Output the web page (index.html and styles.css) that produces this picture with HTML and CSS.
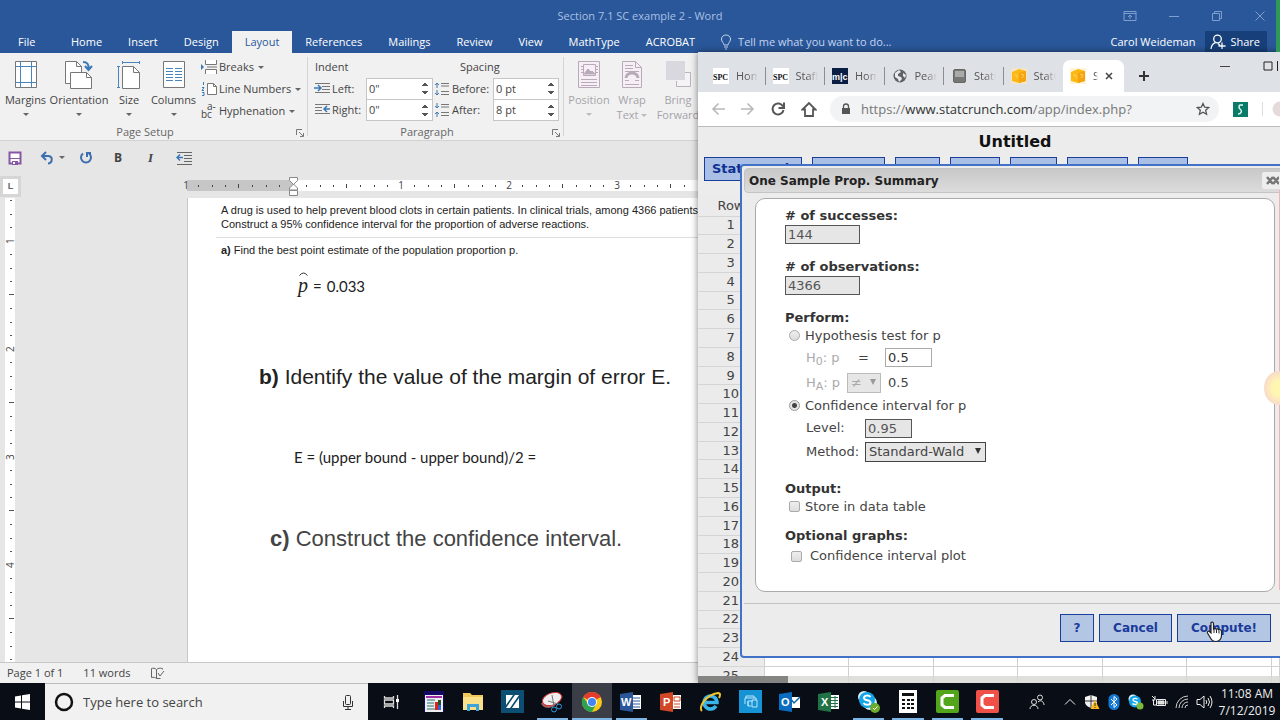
FILE: index.html
```html
<!DOCTYPE html>
<html lang="en">
<head>
<meta charset="utf-8">
<title>Section 7.1 SC example 2 - Word</title>
<link rel="stylesheet" href="styles.css">
</head>
<body>
<div class="desktop">
<main class="workspace">

<section class="word">
  <header class="word-head">
    <div class="title-row">
      <span></span>
      <span class="doc-title">Section 7.1 SC example 2 - Word</span>
      <div class="win-controls">
        <button aria-label="Ribbon options"><svg width="14" height="12" fill="none" stroke="currentColor"><path d="M1 1.500h12v9H1zM1 3.500h12M7 9V5M5 7l2-2 2 2"/></svg></button>
        <button aria-label="Minimize"><svg width="12" height="12" fill="none" stroke="currentColor"><path d="M1 6.500h10"/></svg></button>
        <button aria-label="Restore"><svg width="12" height="12" fill="none" stroke="currentColor"><path d="M1.500 3.500h7v7h-7zM3.500 3.500v-2h7v7h-2"/></svg></button>
        <button aria-label="Close"><svg width="12" height="12" fill="none" stroke="currentColor"><path d="M1.500 1.500l9 9M10.500 1.500l-9 9"/></svg></button>
      </div>
    </div>
    <nav class="word-tabs">
      <button class="file">File</button><button>Home</button><button>Insert</button><button>Design</button><button class="on">Layout</button><button>References</button><button>Mailings</button><button>Review</button><button>View</button><button>MathType</button><button>ACROBAT</button>
      <button class="tell"><svg width="12" height="16" fill="none" stroke="currentColor"><path d="M4 11c0-2-2.500-3-2.500-6a4.500 4 0 0 1 9 0c0 3-2.500 4-2.500 6zM4 13h4M5 15h2"/></svg>Tell me what you want to do...</button>
      <button class="user">Carol Weideman</button>
      <button class="share"><svg width="16" height="16" fill="none" stroke="currentColor" stroke-width="1.300"><circle cx="7.500" cy="5" r="3.800"/><path d="M1 15c.3-3 2-5.500 4.500-6.300M8 9.500l2 2M12 8.500v6.500M8.500 12h7"/></svg>Share</button>
    </nav>
  </header>

  <div class="ribbon">
    <section class="group setup">
      <div class="group-body">
        <button class="big margins"><svg width="24" height="28" fill="none"><path d="M1.500 1.500h21v26h-21z" fill="#fff" stroke="#777"/><path d="M6.500 2v25M17.500 2v25M2 6.500h20M2 22.500h20" stroke="#4a84bd"/></svg><span>Margins</span><i></i></button>
        <button class="big orient"><svg width="30" height="30" fill="none"><path d="M1.500 1.500h11l5 5v17h-16z" fill="#fff" stroke="#777"/><path d="M12.500 1.500v5h5" stroke="#777"/><path d="M6.500 12.500h16l5 5v11h-21z" fill="#fff" stroke="#777"/><path d="M22.500 12.500v5h5" stroke="#777"/><path d="M19 2c4 0 6 2 5.500 7M21 6l3.500 4L28 6" stroke="#3b78b5" stroke-width="2"/></svg><span>Orientation</span><i></i></button>
        <button class="big size"><svg width="26" height="30" fill="none"><path d="M6.500 6.500h11l6 6v16h-17z" fill="#fff" stroke="#777"/><path d="M17.500 6.500v6h6" stroke="#777"/><path d="M6 2.500h18M6.500 1v3M23.500 1v3M2.500 6v22M1 6.500h3M1 27.500h3" stroke="#4a84bd"/></svg><span>Size</span><i></i></button>
        <button class="big cols"><svg width="24" height="28" fill="none"><path d="M1.500 1.500h21v26h-21z" fill="#fff" stroke="#777"/><path d="M4 8.500h7M4 11.500h7M4 14.500h7M4 17.500h7M4 20.500h7M13 8.500h7M13 11.500h7M13 14.500h7M13 17.500h7M13 20.500h7" stroke="#4a84bd"/></svg><span>Columns</span><i></i></button>
        <div class="stack">
          <button><svg width="16" height="16" fill="none" stroke="#777"><path d="M4.500 1v4.500h11V1M4.500 15v-4.500h11V15M6 8h10" fill="#fff"/><path d="M0 5l3 3-3 3z" fill="#3b78b5" stroke="none"/></svg>Breaks<i></i></button>
          <button><svg width="16" height="16" fill="none" stroke="#777"><path d="M6.500 2.500h6l3 3v8h-9z" fill="#fff"/><path d="M12.500 2.500v3h3"/><path d="M2.500 1v3M1 6.500h2l-2 3h2M1 11.500h2v3H1" stroke="#3b78b5"/></svg>Line Numbers<i></i></button>
          <button><svg class="hyph" width="16" height="16"><text x="0" y="15">bc</text><text x="6" y="7">a-</text></svg>Hyphenation<i></i></button>
        </div>
      </div>
      <footer>Page Setup<button class="launch" aria-label="Page Setup dialog"><svg width="8" height="8" fill="none" stroke="#777"><path d="M.5 6V.5H6M3 3l4 4M7.500 4v3.500H4"/></svg></button></footer>
    </section>
    <section class="group para">
      <div class="group-body para-grid">
        <span class="hd">Indent</span><span></span><span class="hd sp">Spacing</span><span></span>
        <label for="il"><svg width="16" height="14" fill="none" stroke="#777"><path d="M1 1.500h15M8 4.500h8M8 7.500h8M1 10.500h15"/><path d="M0 6h6M4 3l3 3-3 3" stroke="#3b78b5" stroke-width="1.500"/></svg>Left:</label><span class="spin"><input id="il" value='0"'><b></b></span>
        <label class="r" for="sb"><svg width="16" height="16" fill="none" stroke="#777"><path d="M7 2.500h8M7 5h8M7 10.500h8M7 13.500h8"/><path d="M3 7V2M1 4l2-2 2 2M3 9v5M1 12l2 2 2-2" stroke="#3b78b5"/></svg>Before:</label><span class="spin"><input id="sb" value="0 pt"><b></b></span>
        <label for="ir"><svg width="16" height="14" fill="none" stroke="#777"><path d="M1 1.500h15M1 4.500h7M1 7.500h7M1 10.500h15"/><path d="M16 6h-6M13 3l-3 3 3 3" stroke="#3b78b5" stroke-width="1.500"/></svg>Right:</label><span class="spin"><input id="ir" value='0"'><b></b></span>
        <label class="r" for="sa"><svg width="16" height="16" fill="none" stroke="#777"><path d="M7 2.500h8M7 5h8M7 10.500h8M7 13.500h8"/><path d="M3 1v5M1 4l2 2 2-2M3 15v-5M1 12l2-2 2 2" stroke="#3b78b5"/></svg>After:</label><span class="spin"><input id="sa" value="8 pt"><b></b></span>
      </div>
      <footer>Paragraph<button class="launch" aria-label="Paragraph dialog"><svg width="8" height="8" fill="none" stroke="#777"><path d="M.5 6V.5H6M3 3l4 4M7.500 4v3.500H4"/></svg></button></footer>
    </section>
    <section class="group arrange">
      <div class="group-body">
        <button class="big pos"><svg width="24" height="28" fill="none" stroke="#b9aab9"><path d="M1.500 1.500h21v26h-21z" fill="#f6f0f6"/><path d="M6.500 4.500h12v11h-12zM4 6.500h2M4 9.500h2M4 12.500h2M19 6.500h2M19 9.500h2M19 12.500h2M4 19.500h16M4 22.500h16M4 25.500h16"/><path d="M7 14l4-5 3 3 1-1 3 3z" fill="#b9aab9"/></svg><span>Position</span><i></i></button>
        <button class="big wrap"><svg width="22" height="28" fill="none" stroke="#b9aab9"><path d="M1.500 1.500h13l6 6v20h-19z" fill="#f6f0f6"/><path d="M14.500 1.500v6h6M4 5.500h8M4 8.500h8M4 11.500h14M4 20.500h4M14 20.500h4M4 24.500h14"/><path d="M5 18a6 5 0 0 1 12 0" stroke-width="3"/></svg><span>Wrap</span><span>Text <i></i></span></button>
        <button class="big bring"><svg width="26" height="28" fill="none" stroke="#b9b4bc"><path d="M18 12.500h7.500v14h-14V21" fill="#f6f3f6"/><path d="M1 1h19v19H1z" fill="#dad8df" stroke="none"/></svg><span>Bring</span><span>Forward</span></button>
      </div>
    </section>
  </div>

  <div class="qat">
    <button aria-label="Save"><svg width="14" height="14" fill="none"><path d="M1.500 1.500h11v11h-11z" fill="#fff" stroke="#8757a5" stroke-width="2"/><path d="M1 7h12v1H1zM4 10h6v4H4z" fill="#8757a5"/><path d="M5 11h2v2H5z" fill="#fff"/></svg></button>
    <button class="undo" aria-label="Undo"><svg width="14" height="14" fill="none" stroke="#3d6fae" stroke-width="2"><path d="M6 1L2 5l4 4M2 5h6c5 0 5 7 0 7.500"/></svg><i></i></button>
    <button aria-label="Repeat"><svg width="14" height="14" fill="none" stroke="#3d6fae" stroke-width="2"><path d="M4 2.500a5 5 0 1 0 6 0M8 6V2h4"/></svg></button>
    <button class="bold">B</button>
    <button class="ital">I</button>
    <button aria-label="Decrease indent"><svg width="16" height="14" fill="none" stroke="#666"><path d="M1 1.500h15M8 4.500h8M8 7.500h8M8 10.500h8M1 13.500h15"/><path d="M7 6.500H1M4 3.500l-3 3 3 3" stroke="#3b78b5" stroke-width="1.500"/></svg></button>
  </div>

  <div class="doc-area">
    <div class="corner"><span>L</span></div>
    <div class="hruler">
      <svg width="100%" height="20">
        <defs><pattern id="ticks" width="108" height="12" patternUnits="userSpaceOnUse" patternTransform="translate(106 4)"><path d="M13 5h1v2h-1zM27 5h1v2h-1zM40 5h1v2h-1zM53 4h1v4h-1zM67 5h1v2h-1zM81 5h1v2h-1zM94 5h1v2h-1z" fill="#444"/></pattern></defs>
        <rect y="4" width="106" height="11" fill="#c6c6c6"/><rect x="106" y="4" width="100%" height="11" fill="#fff"/>
        <rect y="4" width="100%" height="12" fill="url(#ticks)"/>
        <g class="num"><text x="-1" y="13">1</text><text x="214" y="13">1</text><text x="322" y="13">2</text><text x="430" y="13">3</text></g>
        <path d="M102.500 1.500h8v3l-4 4-4-4zM102.500 14v-2l4-4 4 4v2zM102.500 14.500h8v5h-8z" fill="#fff" stroke="#888"/>
      </svg>
    </div>
    <div class="vruler">
      <svg width="10" height="100%">
        <defs><pattern id="vticks" width="10" height="108" patternUnits="userSpaceOnUse" patternTransform="translate(0 43)"><path d="M5 13h2v1H5zM5 27h2v1H5zM5 40h2v1H5zM4 53h5v1H4zM5 67h2v1H5zM5 81h2v1H5zM5 94h2v1H5z" fill="#555"/></pattern></defs>
        <rect width="10" height="100%" fill="#fff"/><rect width="10" height="100%" fill="url(#vticks)"/>
        <g class="num"><text transform="translate(9 46) rotate(-90)">1</text><text transform="translate(9 154) rotate(-90)">2</text><text transform="translate(9 262) rotate(-90)">3</text><text transform="translate(9 370) rotate(-90)">4</text></g>
      </svg>
    </div>
    <article class="paper">
      <p class="small">A drug is used to help prevent blood clots in certain patients. In clinical trials, among 4366 patients<br>Construct a 95% confidence interval for the proportion of adverse reactions.</p>
      <p class="small part-a"><b>a)</b> Find the best point estimate of the population proportion p.</p>
      <p class="phat"><span class="hat"><svg width="9" height="4" fill="none" stroke="#333"><path d="M.5 3.500q4-5 8 0"/></svg><em>p</em></span><span>=</span><span>0.033</span></p>
      <p class="large part-b"><b>b)</b> Identify the value of the margin of error E.</p>
      <p class="eq">E = (upper bound - upper bound)/2 =</p>
      <p class="large part-c"><b>c)</b> Construct the confidence interval.</p>
    </article>
  </div>
  <footer class="status"><span>Page 1 of 1</span><span>11 words</span><svg width="15" height="13" fill="none" stroke="#666"><path d="M6.500 2.500C5 1 3 1 1.500 1.500v9c2-.5 4 0 5 1zM6.500 2.500C8 1 10 1 12.500 1.500v1M6.500 11.500h4M8 6l2 3 4-5"/></svg></footer>
</section>

<section class="chrome">
  <div class="tabstrip">
    <div class="tabs">
      <button class="tab"><svg width="16" height="16"><path d="M0 0h16v16H0z" fill="#fff"/><text x="0" y="12" class="spc">SPC</text></svg><span>Home</span></button>
      <button class="tab"><svg width="16" height="16"><path d="M0 0h16v16H0z" fill="#fff"/><text x="0" y="12" class="spc">SPC</text></svg><span>Staff</span></button>
      <button class="tab"><svg width="16" height="16"><path d="M0 0h16v16H0z" fill="#0b1f44"/><text x="0" y="12" class="mc">m|c</text></svg><span>Home</span></button>
      <button class="tab"><svg width="16" height="16"><circle cx="8" cy="8" r="6.500" fill="#5f6368"/><path d="M3 5l4-3 2 2-3 2v2l3 1 1 2-3 3-1-3-3-2zM11 5l3 2-1 3-2-2z" fill="#e8eaee"/></svg><span>Pear</span></button>
      <button class="tab"><svg width="16" height="16"><rect x="2.500" y="1.500" width="12" height="13" rx="1.500" fill="#777" stroke="#666"/><path d="M4 3h9v6H4z" fill="#aaa"/></svg><span>StatC</span></button>
      <button class="tab"><svg width="16" height="16"><path d="M0 0h16v16H0z" fill="#f3e6c8"/><path d="M1 4l7-3 7 2v10l-7 2-7-2z" fill="#fdb813"/><path d="M8 5l7-2v10l-7 2z" fill="#f5a312"/><path d="M3 7h3v3M10 6l3 1-2 3" fill="none" stroke="#fcd25a"/></svg><span>StatC</span></button>
      <button class="tab on"><svg width="16" height="16"><path d="M0 0h16v16H0z" fill="#fff4d8"/><path d="M1 4l7-3 7 2v10l-7 2-7-2z" fill="#fdb813"/><path d="M8 5l7-2v10l-7 2z" fill="#f5a312"/><path d="M3 7h3v3M10 6l3 1-2 3" fill="none" stroke="#fcd25a"/></svg><span>S</span><svg class="x" width="8" height="8" stroke="#444" stroke-width="1.500"><path d="M1 1l6 6M7 1L1 7"/></svg></button>
    </div>
    <button class="newtab" aria-label="New tab"><svg width="12" height="12" stroke="#333" stroke-width="2"><path d="M6 1v10M1 6h10"/></svg></button>
    <div class="cwin"><button aria-label="Minimize window"><svg width="10" height="10" stroke="#444"><path d="M0 5.500h10"/></svg></button><button aria-label="Maximize window"><svg width="15" height="10" stroke="#222" fill="none"><path d="M1 1h8v8H1zM14.500 0v10"/></svg></button></div>
  </div>
  <div class="toolbar">
    <button aria-label="Back"><svg width="14" height="14" fill="none" stroke="#b8b8b8" stroke-width="1.600"><path d="M14 7H2M7.500 1.500L2 7l5.500 5.500"/></svg></button>
    <button aria-label="Forward"><svg width="14" height="14" fill="none" stroke="#b8b8b8" stroke-width="1.600"><path d="M0 7h12M6.500 1.500L12 7l-5.500 5.500"/></svg></button>
    <button aria-label="Reload"><svg width="14" height="14" fill="none" stroke="#555" stroke-width="2"><path d="M12 4.500A5.500 5.500 0 1 0 12.500 8M13 .5V6H7.500"/></svg></button>
    <button aria-label="Home page"><svg width="16" height="16" fill="none" stroke="#555" stroke-width="1.800"><path d="M1.500 8.500L8 2l6.500 6.500h-2.500V15H4V8.500z"/></svg></button>
    <div class="omni"><svg width="10" height="12"><path d="M1 5h8v6H1z" fill="#555"/><path d="M2.500 5V3.500a2.500 2.500 0 0 1 5 0V5" fill="none" stroke="#555" stroke-width="1.300"/></svg><span class="url">https://<b>www.statcrunch.com</b>/app/index.php?</span><svg width="14" height="14" fill="none" stroke="#555" stroke-width="1.300"><path d="M7 1.500l1.700 3.700 4 .4-3 2.700.9 4L7 10.200l-3.600 2.100.9-4-3-2.700 4-.4z"/></svg></div>
    <svg class="ext" width="15" height="15"><path d="M0 0h15v15H0z" fill="#0c7a68"/><path d="M10 3H7.500c-2 0-2 3 0 4.500S8 12 5 12" fill="none" stroke="#d8fff2" stroke-width="1.500"/></svg>
    <span class="vsep"></span>
    <svg class="avatar" width="16" height="16"><circle cx="8" cy="8" r="7.500" fill="#e6dada"/></svg>
  </div>

  <div class="app">
    <h1>Untitled</h1>
    <div class="menu"><button>StatCrunch</button><button aria-label="Applets"></button><button aria-label="Edit"></button><button aria-label="Data"></button><button aria-label="Stat"></button><button aria-label="Graph"></button><button aria-label="Help"></button></div>
    <div class="sheet">
    <table>
      <colgroup><col class="c0"><col class="c1"><col class="c2"><col class="c1"><col class="c2"><col class="c1"><col class="c2"><col></colgroup>
      <tr class="head"><th>Row<th><th><th><th><th><th><th>
      <tr><th>1<td><td><td><td><td><td><td>
      <tr><th>2<td><td><td><td><td><td><td>
      <tr><th>3<td><td><td><td><td><td><td>
      <tr><th>4<td><td><td><td><td><td><td>
      <tr><th>5<td><td><td><td><td><td><td>
      <tr><th>6<td><td><td><td><td><td><td>
      <tr><th>7<td><td><td><td><td><td><td>
      <tr><th>8<td><td><td><td><td><td><td>
      <tr><th>9<td><td><td><td><td><td><td>
      <tr><th>10<td><td><td><td><td><td><td>
      <tr><th>11<td><td><td><td><td><td><td>
      <tr><th>12<td><td><td><td><td><td><td>
      <tr><th>13<td><td><td><td><td><td><td>
      <tr><th>14<td><td><td><td><td><td><td>
      <tr><th>15<td><td><td><td><td><td><td>
      <tr><th>16<td><td><td><td><td><td><td>
      <tr><th>17<td><td><td><td><td><td><td>
      <tr><th>18<td><td><td><td><td><td><td>
      <tr><th>19<td><td><td><td><td><td><td>
      <tr><th>20<td><td><td><td><td><td><td>
      <tr><th>21<td><td><td><td><td><td><td>
      <tr><th>22<td><td><td><td><td><td><td>
      <tr><th>23<td><td><td><td><td><td><td>
      <tr><th>24<td><td><td><td><td><td><td>
      <tr><th>25<td><td><td><td><td><td><td>
    </table>
    </div>
    <div class="hscroll"><span></span></div>
  </div>

  <form class="dialog" onsubmit="return false">
    <header><h2>One Sample Prop. Summary</h2><button type="button" aria-label="Close dialog"><svg width="13" height="9" stroke="#777" stroke-width="2.500"><path d="M1 1l6 7M7 1L1 8M7 1l6 7M13 1L7 8"/></svg></button></header>
    <div class="panel">
      <label class="hd" for="succ"># of successes:</label>
      <input class="box w75" id="succ" value="144">
      <label class="hd gap" for="obs"># of observations:</label>
      <input class="box w75" id="obs" value="4366">
      <div class="hd gap">Perform:</div>
      <div class="row r18"><input type="radio" name="t" id="ht"><label for="ht">Hypothesis test for p</label></div>
      <div class="row r25 sub dim"><label for="h0" class="h0">H<sub>0</sub>: p</label><span class="equals">=</span><input class="box white w47" id="h0" value="0.5"></div>
      <div class="row r25 sub dim"><label for="ha">H<sub>A</sub>: p</label><span class="pick dis"><select id="ha" disabled><option>≠</option></select></span><span class="val">0.5</span></div>
      <div class="row r22"><input type="radio" name="t" id="ci" checked><label for="ci">Confidence interval for p</label></div>
      <div class="row r22 sub"><label for="lv" class="lv">Level:</label><input class="box w47" id="lv" value="0.95"></div>
      <div class="row r25 sub"><label for="me" class="lv">Method:</label><span class="pick"><select id="me"><option>Standard-Wald</option></select></span></div>
      <div class="hd gap3">Output:</div>
      <div class="row r18"><input type="checkbox" id="st"><label for="st">Store in data table</label></div>
      <div class="hd gap2">Optional graphs:</div>
      <div class="row r22 plot"><input type="checkbox" id="cp"><label for="cp">Confidence interval plot</label></div>
    </div>
    <footer><button type="button" class="q">?</button><button type="button" class="cancel">Cancel</button><button type="button" class="compute">Compute!</button></footer>
  </form>
</section>

<span class="edge-top"></span><span class="edge-red"></span><span class="blob"></span>
<svg class="cursor" width="18" height="22"><path d="M5 1.500c1.500-1 2.500 0 2.500 1.500v5c1-1 2.300-.8 2.700.3 1-.7 2.200-.4 2.500.7 1.500-.7 2.800 0 2.800 1.500v4c0 3-2 6-5.500 6-3 0-4.500-1.500-5.500-3.500l-3-5c-.5-1.500 1-2.500 2.200-1.200L5 12z" fill="#fff" stroke="#222" stroke-width="1.200"/><path d="M8 8v4M10.500 9v3M13 10v2.500" stroke="#222"/></svg>
</main>

<footer class="taskbar">
  <button class="start" aria-label="Start"><svg width="15" height="16" fill="#fff"><path d="M0 2.500l6-1v6H0zM7 1.300L15 0v7.500H7zM0 8.500h6v6l-6-1zM7 8.500h8V16l-8-1.300z"/></svg></button>
  <label class="search"><svg width="20" height="20" fill="none" stroke="#111" stroke-width="2.500"><circle cx="10" cy="10" r="8"/></svg><input placeholder="Type here to search" aria-label="Search"><svg width="12" height="16" fill="none" stroke="#333"><rect x="3.500" y="1.500" width="5" height="9" rx="1"/><path d="M1.500 7v5.500h9V7M6 12.500v3M3 15.500h6"/></svg></label>
  <button class="tview" aria-label="Task view"><svg width="16" height="16" fill="none" stroke="#ddd"><path d="M1.500 2v2h9V2M1.500 14v-2h9v2M1.500 6h9v4h-9zM14.500 1v14" stroke-width="1.300"/><path d="M13 5h3v3h-3z" fill="#fff" stroke="none"/></svg></button>
  <div class="apps">
    <button aria-label="Planner"><svg width="22" height="22"><path d="M1 0h20v21H1z" fill="#140a66"/><path d="M2 4h18v17H2z" fill="#eee"/><path d="M3 5h16v2H3z" fill="#a22ba8"/><path d="M4 9h8M4 12h7M4 15h7M4 18h8" stroke="#277"/><path d="M12 11h3v8h-3z" fill="#d22"/><path d="M15 9h3v5h-3z" fill="#252"/><path d="M15 14h3v5h-3z" fill="#36c"/></svg></button>
    <button aria-label="File Explorer"><svg width="22" height="20"><path d="M1 1h7l2 2h11v15H1z" fill="#f0c95a"/><path d="M1 5h20v13H1z" fill="#fbe08a"/><path d="M5 12h12v7h-3v-4H8v4H5z" fill="#3da5dc"/></svg></button>
    <button aria-label="Zotero"><svg width="23" height="23"><path d="M0 0h23v23H0z" fill="#0c4f73"/><path d="M5 5h7L5 15zM14 5h4L9 18H5zM18 8v10h-7z" fill="#fff"/></svg></button>
    <button class="run" aria-label="Snipping Tool"><svg width="24" height="22" fill="none"><path d="M2 12c2 5 9 5 13 1l7-8" stroke="#a66" stroke-width="2"/><ellipse cx="12" cy="8" rx="10" ry="6" fill="#eee" stroke="#c33" transform="rotate(-20 12 8)"/><path d="M12 4l2 11M8 10l10 3" stroke="#777"/><circle cx="14" cy="18.500" r="2.500" stroke="#39d"/><circle cx="19" cy="15.500" r="2.500" stroke="#39d"/></svg></button>
    <button class="run active" aria-label="Chrome"><svg width="22" height="22"><circle cx="11" cy="11" r="10" fill="#fbc816"/><path d="M11 11L2.300 6A10 10 0 0 1 19.700 6z" fill="#e33b2e"/><path d="M2.300 6A10 10 0 0 0 11 21l4-7.500L7 13z" fill="#2fa24f"/><path d="M11 6h8.700L17 5 11 1z" fill="#e33b2e"/><circle cx="11" cy="11" r="5" fill="#fff"/><circle cx="11" cy="11" r="4" fill="#4285f4"/></svg></button>
    <button class="run" aria-label="Word"><svg width="22" height="20"><path d="M9 3h12v14H9z" fill="#fff"/><path d="M13 6h7M13 9h7M13 12h7M13 15h7" stroke="#2b579a"/><path d="M0 2l13-2v20L0 18z" fill="#2b579a"/><text x="1" y="14" class="ic">W</text></svg></button>
    <button aria-label="PowerPoint"><svg width="22" height="20"><path d="M9 3h12v14H9z" fill="#fff"/><path d="M14 5h6v4h-6zM14 12h6M14 15h6" stroke="#d24726" fill="none"/><path d="M0 2l13-2v20L0 18z" fill="#d24726"/><text x="3" y="14" class="ic">P</text></svg></button>
    <button aria-label="Internet Explorer"><svg width="22" height="22" fill="none"><path d="M17 15a6.500 6.500 0 1 1 1-3.500H6" stroke="#39b5ea" stroke-width="3.500"/><path d="M3 20C-1 17 6 4 19 2c3 0 2 3 1 5" stroke="#f0c22c" stroke-width="2"/></svg></button>
    <button aria-label="Workspace"><svg width="23" height="23" fill="none"><path d="M0 0h23v23H0z" fill="#1593d4"/><path d="M7 8V6h8v2M6 14V8h11v2M9 16V11h5M13 10h5v7h-5zM9 11v5h3" stroke="#bfe6fb"/></svg></button>
    <button aria-label="Outlook"><svg width="22" height="20"><path d="M10 5h11v11H10z" fill="#fff"/><path d="M10 5l5 6 6-6" stroke="#0a64ad" fill="none" stroke-width="1.500"/><path d="M0 2l13-2v20L0 18z" fill="#0a6cc0"/><text x="2" y="14" class="ic">O</text></svg></button>
    <button aria-label="Excel"><svg width="22" height="20"><path d="M9 3h12v14H9z" fill="#fff"/><path d="M13 5.500h7M13 8.500h7M13 11.500h7M13 14.500h7M17 4v12" stroke="#217346"/><path d="M0 2l13-2v20L0 18z" fill="#217346"/><text x="3" y="14" class="ic">X</text></svg></button>
    <button class="run" aria-label="Skype"><svg width="24" height="24"><circle cx="7" cy="7" r="6" fill="#dff3fc"/><circle cx="13" cy="13" r="7" fill="#dff3fc"/><circle cx="10" cy="10" r="8" fill="#12a5e8"/><path d="M13.500 7C12 5 7 5 7 8s6.500 1.500 6.500 4.500S8 15.500 6.500 13" stroke="#fff" stroke-width="2" fill="none"/><circle cx="18" cy="18" r="5" fill="#6cab2b"/><path d="M16 18l1.500 1.500 3-3" stroke="#fff" fill="none"/></svg></button>
    <button class="run" aria-label="Calculator"><svg width="18" height="23"><path d="M0 0h18v23H0z" fill="#fff"/><path d="M3 3h12v3H3zM3 9h3v2H3zM8 9h3v2H8zM12 9h3v2h-3zM3 13h3v2H3zM8 13h3v2H8zM12 13h3v2h-3zM3 17h3v2H3zM8 17h3v2H8zM12 17h3v2h-3z" fill="#111"/></svg></button>
    <button class="run" aria-label="Camtasia"><svg width="23" height="23" fill="none"><rect width="23" height="23" rx="2" fill="#53a61b"/><path d="M18 5.500H9L6 8v7l3 2.500h9" stroke="#fff" stroke-width="3"/></svg></button>
    <button class="run" aria-label="Recorder"><svg width="23" height="23" fill="none"><rect width="23" height="23" rx="2" fill="#ef5149"/><path d="M18 5.500H9L6 8v7l3 2.500h9" stroke="#fff" stroke-width="3"/></svg></button>
  </div>
  <div class="tray">
    <svg class="people" width="16" height="16" fill="none" stroke="#ddd"><circle cx="5" cy="8" r="2.500"/><path d="M1 15c0-5 8-5 8 0"/><circle cx="11" cy="3.500" r="2.500"/><path d="M9 8c3-3 6 0 6 3"/></svg>
    <svg width="14" height="16" fill="none" stroke="#eee"><path d="M2 10.500l5-5 5 5"/></svg>
    <svg width="16" height="16"><path d="M1 3l6-2 6 2v5c0 3-3 5-6 6-3-1-6-3-6-6z" fill="#f2f2f2"/><path d="M7 1v13M1 7h12" stroke="#333"/><path d="M11 6l4.500 9h-9z" fill="#fdbb1e"/><path d="M11 9v3M11 13v1" stroke="#333"/></svg>
    <svg width="14" height="16" fill="none"><rect x="1.500" width="11" height="16" rx="5.500" fill="#1377d4"/><path d="M4 5l6 6-3 2.500v-11L10 5l-6 6" stroke="#fff"/></svg>
    <svg width="16" height="16"><circle cx="5" cy="5" r="4.500" fill="#dff3fc"/><circle cx="7" cy="7.500" r="6" fill="#12a5e8"/><path d="M9.500 5C8 4 5 4 5 6s4.500 1 4.500 3-4 2-5 .5" stroke="#fff" stroke-width="1.400" fill="none"/><circle cx="12" cy="12" r="3.500" fill="#7db93a"/></svg>
    <svg width="17" height="14" fill="none" stroke="#eee"><path d="M5.500 4.500h9v6h-9zM16 6v3M1 1l3 3M4 1v4H1M2.500 5v5H5"/><path d="M7 6h6v3H7z" fill="#ddd"/></svg>
    <svg width="14" height="14" fill="none" stroke="#ccc"><path d="M1 13A12 12 0 0 1 13 1M4 13a9 9 0 0 1 9-9M7 13a6 6 0 0 1 6-6M10 13a3 3 0 0 1 3-3"/></svg>
    <svg width="17" height="14" fill="none" stroke="#eee"><path d="M1 4.500h3L8 1v12L4 9.500H1zM10 5q1.500 2 0 4M12 3q3 4 0 8M14 1q4 6 0 12"/></svg>
  </div>
  <time class="clock"><span>11:08 AM</span><span>7/12/2019</span></time>
</footer>
</div>
</body>
</html>
```
FILE: styles.css
```css
* { box-sizing: border-box; }
body { margin: 0; font: 11px/16px "Open Sans", "Noto Sans", sans-serif; color: #444; }
button { border: 0; padding: 0; margin: 0; background: none; font: inherit; color: inherit; white-space: nowrap; }
svg { display: block; flex: none; }
h1, h2, p { margin: 0; }
.desktop { display: flex; flex-direction: column; height: 100vh; overflow: hidden; }
.workspace { position: relative; flex: 1; min-height: 0; overflow: hidden; }
i { display: inline-block; width: 0; height: 0; border: 3px solid transparent; border-top-color: #666; border-bottom: 0; }

/* Word */
.word { display: flex; flex-direction: column; height: 100%; background: #e6e6e6; }
.word-head { background: #2a579a; color: #fff; }
.title-row { display: grid; grid-template-columns: 1fr auto 1fr; align-items: center; height: 31px; color: #a9c0e2; }
.win-controls { display: flex; justify-content: flex-end; gap: 31px; padding-right: 14px; color: #7f9fd0; }
.word-tabs { display: flex; height: 22px; align-items: stretch; }
.word-tabs button { padding: 0 13px; }
.word-tabs .file { width: 58px; padding: 0 0 0 18px; text-align: left; }
.word-tabs .on { background: #f1f1f1; color: #2a579a; }
.word-tabs .tell { display: flex; align-items: center; gap: 6px; padding: 0 12px; color: #c5d5ee; }
.word-tabs .user { margin-left: auto; padding: 0 10px; }
.word-tabs .share { display: flex; align-items: center; gap: 4px; padding: 0 7px 0 5px; margin-right: 13px; background: #17407b; }
.ribbon { display: flex; height: 88px; flex: none; background: #f1f1f1; border-bottom: 1px solid #d2d2d2; }
.group { display: flex; flex-direction: column; position: relative; padding-top: 3px; }
.group::after { content: ""; position: absolute; right: 0; top: 4px; bottom: 4px; border-right: 1px solid #d4d4d4; }
.group footer { display: flex; justify-content: center; align-items: center; height: 16px; color: #666; }
.group .launch { position: absolute; right: 4px; bottom: 3px; }
.group-body { display: flex; height: 68px; }
.setup { width: 308px; }
.setup footer { padding-right: 18px; }
.para { width: 256px; }
.para footer { padding-right: 18px; }
.big { display: flex; flex-direction: column; align-items: center; line-height: 15px; padding-top: 4px; }
.big svg { height: 32px; }
.big > i { margin-top: 6px; }
.margins { width: 51px; }
.orient { width: 56px; }
.size { width: 44px; }
.cols { width: 45px; }
.stack { display: flex; flex-direction: column; padding-left: 5px; }
.stack button { display: flex; align-items: center; gap: 2px; height: 22px; }
.stack i { margin-left: 2px; }
.hyph { font-size: 10px; fill: #444; }
.para-grid { display: grid; grid-template-columns: 58px 67px 60px 66px; grid-template-rows: 22px 21px 22px; align-items: center; }
.para-grid .hd { padding-left: 7px; }
.para-grid .sp { padding-left: 27px; white-space: nowrap; }
.para-grid label { display: flex; align-items: center; gap: 2px; padding-left: 6px; white-space: nowrap; }
.para-grid label.r { padding-left: 1px; }
.spin { display: flex; align-items: center; height: 22px; background: #fff; border: 1px solid #c6c6c6; }
.spin input { width: 0; flex: 1; border: 0; padding: 0 2px; background: none; font: inherit; color: #444; }
.spin b { width: 6px; height: 13px; margin-right: 4px; background: conic-gradient(from 143deg at 50% 0, #555 74deg, transparent 0) 0 0/6px 4px no-repeat, conic-gradient(from -37deg at 50% 100%, #555 74deg, transparent 0) 0 9px/6px 4px no-repeat; }
.arrange { color: #a6a3a8; flex: 1; }
.arrange i { border-top-color: #bbb; vertical-align: 2px; }
.pos { width: 50px; }
.wrap { width: 36px; }
.bring { width: 56px; }
.qat { display: flex; align-items: center; height: 33px; flex: none; padding-left: 8px; font-size: 12px; }
.qat button { display: flex; align-items: center; gap: 5px; }
.qat .undo { margin: 0 14px 0 18px; }
.qat .bold { font-weight: 700; margin-left: 21px; }
.qat .ital { font: italic 700 13px "Liberation Serif", serif; margin: 0 23px 0 26px; }
.doc-area { flex: 1; min-height: 0; display: grid; grid-template-columns: 187px 1fr; grid-template-rows: 24px 1fr; }
.corner { display: flex; width: 21px; height: 21px; margin-top: 2px; padding: 3px; background: #d6d6d6; }
.corner span { flex: 1; background: #fff; font: 700 9px/14px "Liberation Sans", sans-serif; text-align: center; color: #666; }
.hruler { padding-top: 2px; }
.hruler svg, .vruler svg { overflow: visible; }
.num { font: 10px "Open Sans", sans-serif; fill: #444; text-anchor: middle; }
.vruler { padding: 0 0 0 5px; }
.vruler .num { text-anchor: start; }
.paper { background: #fff; border-left: 1px solid #c8c8c8; padding: 5px 0 0 28px; white-space: nowrap; overflow: hidden; color: #222; font-family: "Liberation Sans", sans-serif; }
.small { font-size: 11px; line-height: 14px; padding: 0 0 6px 5px; border-bottom: 1px solid #ddd; }
.part-a { border: 0; padding-top: 5px; }
.phat { display: flex; align-items: baseline; gap: 5px; height: 32px; padding: 12px 0 0 82px; font: 15px/20px Lato, "Open Sans", sans-serif; }
.hat { position: relative; }
.hat svg { position: absolute; left: 1px; top: -3px; }
.hat em { font: italic 20px/20px "Liberation Serif", serif; }
.large { line-height: 24px; }
.part-b { padding: 70px 0 0 43px; font-size: 21px; }
.eq { padding: 58px 0 0 78px; font: 15px/20px Lato, "Open Sans", sans-serif; }
.part-c { padding: 60px 0 0 54px; font-size: 22px; color: #444; }
.status { display: flex; align-items: center; gap: 20px; height: 21px; flex: none; padding-left: 7px; background: #f1f1f1; border-top: 1px solid #c8c8c8; }

/* browser window */
.chrome { position: absolute; left: 698px; top: 52px; right: 0; bottom: 0; display: flex; flex-direction: column; background: #fff; box-shadow: 0 0 7px rgba(0,0,0,.5); overflow: hidden; }
.tabstrip { display: flex; height: 40px; flex: none; padding: 8px 0 0 8px; background: #dee1e6; }
.tabs { display: grid; grid-template-columns: repeat(6, 1fr) 61px; width: 418px; }
.tab { position: relative; display: flex; align-items: center; gap: 7px; padding-left: 7px; color: #555; }
.tab:not(.on)::after { content: ""; position: absolute; right: 0; top: 7px; height: 18px; border-right: 1px solid #8a8d91; }
.tab:nth-child(6)::after { display: none; }
.tab span { width: 22px; overflow: hidden; text-align: left; mask-image: linear-gradient(90deg, #000 50%, transparent); }
.tab.on { background: #fff; border-radius: 7px 7px 0 0; gap: 7px; }
.tab.on span { width: 5px; }
.spc { font: 700 8px "Liberation Serif", serif; fill: #111; }
.mc { font: 700 9px "Liberation Sans", sans-serif; fill: #fff; }
.newtab { padding: 0 14px; }
.cwin { display: flex; align-items: center; gap: 33px; height: 12px; margin-left: auto; padding-right: 2px; }
.toolbar { display: flex; align-items: center; height: 34px; flex: none; padding-left: 13px; background: #fff; }
.toolbar > button { width: 30px; display: flex; }
.omni { flex: 1; display: flex; align-items: center; height: 26px; margin: 0 14px 0 -1px; padding: 0 9px 0 11px; border-radius: 13px; background: #f1f3f4; }
.url { flex: 1; padding-left: 10px; font-size: 13px; color: #777; white-space: nowrap; }
.url b { font-weight: 400; color: #333; }
.vsep { height: 14px; margin: 0 9px 0 14px; border-left: 1px solid #ddd; }
.avatar { margin-right: -8px; }
.app { position: relative; flex: 1; min-height: 0; overflow: hidden; display: flex; flex-direction: column; background: #ececec; border-top: 1px solid #bbb; font-family: "DejaVu Sans", sans-serif; }
.app h1 { font-size: 16px; line-height: 30px; padding-left: 52px; text-align: center; color: #111; }
.menu { display: flex; gap: 10px; height: 24px; flex: none; padding-left: 6px; }
.menu button { width: 50px; border: 1px solid #1a3f9a; background: #a9bfe6; color: #103090; font-weight: 700; font-size: 13px; overflow: hidden; }
.menu button:nth-child(1) { width: 98px; text-align: left; padding-left: 7px; }
.menu button:nth-child(2) { width: 73px; }
.menu button:nth-child(3) { width: 45px; }
.menu button:nth-child(5) { width: 47px; }
.menu button:nth-child(6) { width: 61px; }
.sheet { margin-top: 15px; flex: 1; min-height: 0; overflow: hidden; }
.sheet table { width: 100%; height: 490px; border-collapse: collapse; table-layout: fixed; background: #fff; }
.sheet .head { height: 20px; }
.c0 { width: 66px; }
.c1 { width: 84px; }
.c2 { width: 85px; }
.sheet th { padding: 0; border-bottom: 1px solid #d5d5d5; background: #ebebeb; font-size: 13px; line-height: 16px; font-weight: 400; }
.sheet td { padding: 0; border: 1px solid #d0d0d0; }
.hscroll { position: absolute; left: 0; right: 0; bottom: 0; height: 7px; background: rgba(215,215,210,.8); }
.hscroll span { display: block; width: 90px; height: 100%; background: rgba(110,110,110,.8); }

/* dialog */
.dialog { position: absolute; left: 42px; top: 112px; right: -8px; display: flex; flex-direction: column; border: 2px solid #4172c8; border-radius: 4px; background: #ececec; font: 13px/18px "DejaVu Sans", sans-serif; color: #444; padding: 2px; }
.dialog header { display: flex; justify-content: space-between; align-items: center; height: 25px; padding: 0 0 0 4px; border: 1px solid #c4c4c4; border-radius: 4px; background: linear-gradient(#c8c8c8, #dcdcdc); }
.dialog h2 { font-size: 12px; color: #222; }
.dialog header button { padding: 4px; background: #eee; border-radius: 2px; }
.panel { display: flex; flex-direction: column; align-items: flex-start; height: 394px; margin: 5px 9px 0 11px; padding: 8px 0 0 29px; border: 1px solid #aaa; border-radius: 10px; background: #fff; }
.panel .hd { font-weight: 700; color: #333; }
.gap { margin-top: 14px; }
.gap2 { margin-top: 11px; }
.gap3 { margin-top: 16px; }
.box { height: 19px; padding: 0 2px; border: 1px solid #555; background: #e6e6e6; font: inherit; color: #555; }
.box.white { background: #fff; border-color: #aaa; color: #333; }
.w75 { width: 75px; }
.w47 { width: 47px; }
.row { display: flex; align-items: center; white-space: nowrap; }
.row label { flex: none; }
.r18 { height: 18px; }
.r22 { height: 22px; }
.r25 { height: 25px; }
.sub { padding-left: 21px; }
.dim { color: #aaa; }
.dim sub { font-size: 11px; line-height: 0; vertical-align: -3px; }
.h0 { width: 52px; }
.equals { width: 27px; color: #444; }
.val { padding-left: 7px; color: #444; }
.lv { width: 59px; }
.row input[type=radio], .row input[type=checkbox] { appearance: none; width: 11px; height: 11px; margin: 0 5px 2px 4px; border: 1px solid #aaa; background: linear-gradient(#eee, #ddd); }
.row input[type=radio] { border-radius: 50%; }
.row input[type=radio]:checked { background: radial-gradient(#444 2px, #e6e6e6 3px); border-color: #999; }
.row input[type=checkbox] { border-radius: 2px; }
.plot input[type=checkbox] { margin: 0 8px 0 6px; }
.pick { position: relative; display: flex; }
.pick::after { content: ""; position: absolute; right: 5px; top: 6px; border: 3px solid transparent; border-top: 6px solid #333; border-bottom: 0; }
.pick select { appearance: none; width: 121px; height: 20px; padding: 0 3px; border: 1px solid #444; border-radius: 0; background: #e6e6e6; font: inherit; color: #444; }
.dis { margin-left: 7px; }
.dis::after { border-top-color: #999; }
.dis select { width: 34px; border-color: #bbb; color: #aaa; opacity: 1; }
.dialog footer { display: flex; justify-content: flex-end; gap: 5px; margin: 11px 0 0; padding: 10px 13px 12px 0; border-top: 1px solid #c2c2c2; }
.dialog footer button { height: 28px; border: 1px solid #1a3f9a; background: #b3c6e3; color: #1a3a9a; font-weight: 700; font-size: 12px; }
.q { width: 34px; }
.cancel { width: 73px; }
.compute { width: 94px; }

/* overlays at the right edge */
.edge-top { position: absolute; right: 0; top: 0; width: 4px; height: 52px; background: #2f9a57; }
.edge-red { position: absolute; right: 0; top: 190px; width: 1px; height: 400px; background: #eeb4b8; }
.blob { position: absolute; right: -14px; top: 371px; width: 30px; height: 34px; border-radius: 50%; background: radial-gradient(#fff6b0 30%, #f3c6dc); }
.cursor { position: absolute; left: 1206px; top: 621px; }

/* taskbar */
.taskbar { display: flex; height: 37px; flex: none; background: #090d15; color: #eee; }
.start { width: 45px; display: flex; align-items: center; justify-content: center; }
.search { display: flex; align-items: center; gap: 9px; width: 323px; padding: 0 14px 0 9px; background: #f1f1f1; border-top: 1px solid #bbb; }
.search input { flex: 1; min-width: 0; border: 0; padding: 0; background: none; font: 13px/20px "Open Sans", sans-serif; }
.search input::placeholder { color: #444; opacity: 1; }
.tview { width: 45px; display: flex; align-items: center; justify-content: center; }
.apps { display: grid; grid-template-columns: repeat(15, 1fr); width: 593px; margin-left: 1px; }
.apps button { position: relative; display: flex; align-items: center; justify-content: center; }
.run::after { content: ""; position: absolute; left: 4px; right: 4px; bottom: 0; height: 2px; background: #7db4e6; }
.active { background: #3b3e46; }
.active::after { left: 0; right: 0; }
.ic { font: 700 11px "Liberation Sans", sans-serif; fill: #fff; }
.tray { display: flex; align-items: center; gap: 7px; margin-left: auto; padding-right: 9px; }
.people { margin-right: 11px; }
.clock { display: flex; flex-direction: column; justify-content: center; align-items: center; width: 50px; margin-right: 8px; font-size: 12px; line-height: 17px; white-space: nowrap; }
```
